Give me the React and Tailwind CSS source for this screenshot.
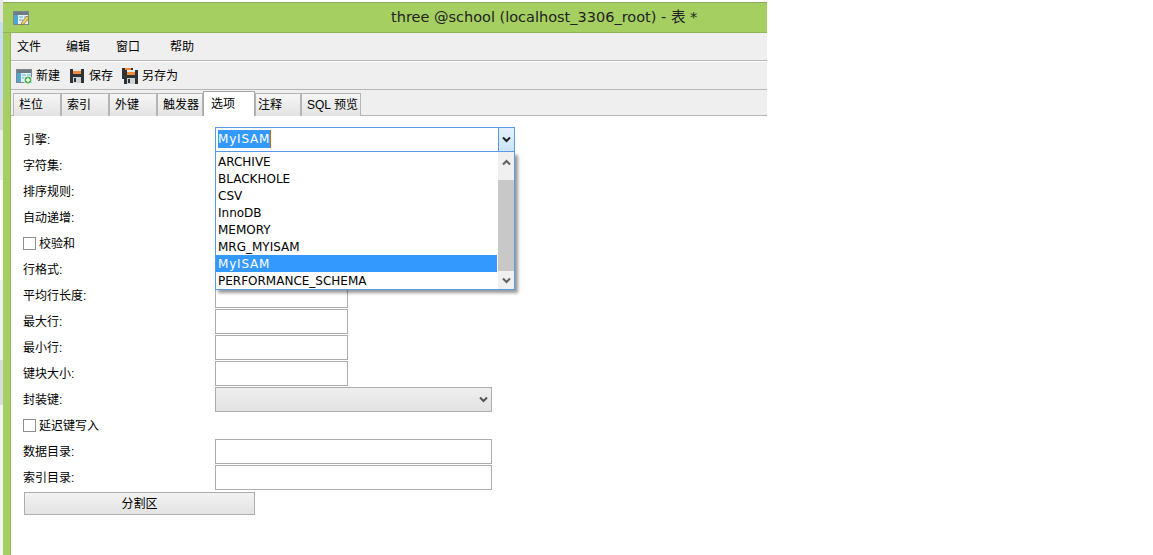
import React from 'react';

const cjk = '[font-family:"Liberation_Sans","Noto_Sans_CJK_SC",sans-serif]';
const latin = '[font-family:"DejaVu_Sans","Noto_Sans_CJK_SC",sans-serif]';

const TableIcon = ({ children }) => (
  <svg width="16" height="16" viewBox="0 0 16 16" className="shrink-0">
    <rect x="0.5" y="1.5" width="15" height="13" fill="#e8f1f6" stroke="#7d8790" />
    <rect x="1" y="2" width="14" height="3" fill="#6f7c86" />
    <rect x="1" y="5" width="4" height="9" fill="#4fa8d0" />
    <rect x="6" y="6" width="4" height="2" fill="#9fd0e6" />
    <rect x="11" y="6" width="4" height="2" fill="#9fd0e6" />
    <rect x="6" y="9" width="4" height="2" fill="#9fd0e6" />
    <rect x="11" y="9" width="4" height="2" fill="#9fd0e6" />
    {children}
  </svg>
);

const Floppy = ({ x = 0, y = 0 }) => (
  <g transform={`translate(${x} ${y})`}>
    <rect x="0" y="1" width="14" height="14" fill="#2e3338" />
    <rect x="3" y="1" width="8" height="5" fill="#f08a3c" />
    <rect x="3" y="1" width="8" height="2" fill="#e8e8e8" />
    <rect x="3" y="9" width="8" height="6" fill="#cfd3d6" />
    <rect x="4" y="10" width="2" height="4" fill="#2e3338" />
  </g>
);

const Field = ({ className = 'w-[133px]' }) => (
  <div className={`h-[25px] mt-px border border-[#adadad] bg-white ${className}`} />
);

const Row = ({ label, children }) => (
  <div className="h-[26px] flex items-start">
    <span className="w-[204px] shrink-0 pl-3 leading-[28px]">{label}</span>
    {children}
  </div>
);

const Check = ({ label }) => (
  <div className="h-[26px] flex items-center pl-3 pt-px">
    <span className="w-[13px] h-[13px] border border-[#8e8e8e] bg-white mr-[3px]" />
    <span>{label}</span>
  </div>
);

const Tab = ({ label, className, active }) => (
  <div
    className={
      active
        ? `h-[25px] -mb-px mt-px flex items-start pt-[3px] pl-[7px] bg-white border border-b-0 border-[#a8a8a8] ${className}`
        : `h-[23px] mt-[3px] flex items-center whitespace-nowrap bg-gradient-to-b from-[#f6f6f6] to-[#e3e3e3] border border-b-0 border-[#b5b5b5] ${className}`
    }
  >
    {label}
  </div>
);

const Chevron = ({ color = '#555555' }) => (
  <svg width="9" height="7" viewBox="0 0 9 7">
    <path d="M1 1.5 L4.5 5 L8 1.5" fill="none" stroke={color} strokeWidth="2" />
  </svg>
);

const engines = ['ARCHIVE', 'BLACKHOLE', 'CSV', 'InnoDB', 'MEMORY', 'MRG_MYISAM', 'MyISAM', 'PERFORMANCE_SCHEMA'];

export default function App() {
  return (
    <div className={`relative w-[1153px] h-[555px] overflow-hidden bg-white flex text-[12px] text-black ${cjk}`}>
      {/* bit of the window behind */}
      <div className="w-[3px] shrink-0 flex flex-col">
        <div className="h-[22px] bg-[#e4e4e4]" />
        <div className="h-[78px] bg-[#c5dcf2]" />
        <div className="h-[30px] bg-[#d8d8d8]" />
        <div className="h-[50px] bg-[#ececec]" />
        <div className="h-[100px] bg-white" />
        <div className="h-[80px] bg-[#eef1f5]" />
        <div className="h-[45px] bg-[#d9dde2]" />
        <div className="flex-1 bg-[#f4f4f4]" />
      </div>

      <div className="w-[764px] shrink-0 mt-[2px] flex flex-col border-t border-[#87a85a] bg-[#a5cf61]">
        <div className="h-[30px] shrink-0 flex items-center pl-[10px] border-b border-[#8fb358]">
          <TableIcon>
            <path d="M8 15 L9 12 L14 6 L16 8 L11 14 Z" fill="#f4d35e" stroke="#7a5a20" strokeWidth="0.6" />
          </TableIcon>
          <span className={`ml-[362px] text-[14.5px] leading-none text-[#222222] whitespace-nowrap ${latin}`}>
            three @school (localhost_3306_root) - 表 *
          </span>
        </div>

        <div className="flex-1 flex min-h-0">
          <div className="w-[8px] shrink-0 border-r border-[#93b85c]" />
          <div className="flex-1 min-w-0 bg-white flex flex-col">
            <div className="h-[28px] shrink-0 bg-[#efefef] border-b border-[#b5b5b5] flex items-center">
              <span className="ml-[6px] w-[49px]">文件</span>
              <span className="w-[50px]">编辑</span>
              <span className="w-[54px]">窗口</span>
              <span>帮助</span>
            </div>

            <div className="h-[29px] shrink-0 bg-[#efefef] border-t border-white border-b border-b-[#b5b5b5] flex items-center pl-[5px] pt-px">
              <TableIcon>
                <circle cx="12" cy="12" r="4" fill="#3fae49" stroke="#fff" strokeWidth="0.8" />
                <path d="M12 9.8 V14.2 M9.8 12 H14.2" stroke="#fff" strokeWidth="1.4" />
              </TableIcon>
              <span className="ml-[4px] w-[33px]">新建</span>
              <svg width="16" height="16" viewBox="0 0 16 16" className="shrink-0">
                <Floppy x={1} />
              </svg>
              <span className="ml-[4px] w-[33px]">保存</span>
              <svg width="16" height="16" viewBox="0 0 16 16" className="shrink-0">
                <rect x="0" y="0" width="11" height="11" fill="#2e3338" />
                <rect x="3" y="0" width="6" height="3" fill="#f08a3c" />
                <Floppy x={2} y={1} />
              </svg>
              <span className="ml-[4px]">另存为</span>
            </div>

            <div className="h-[26px] shrink-0 bg-[#efefef] border-b border-[#b5b5b5] flex pl-[2px]">
              <Tab label="栏位" className="w-[48px] pl-[5px]" />
              <Tab label="索引" className="w-[48px] pl-[5px]" />
              <Tab label="外键" className="w-[48px] pl-[5px]" />
              <Tab label="触发器" className="w-[46px] pl-[5px]" />
              <Tab label="选项" className="w-[52px]" active />
              <Tab label="注释" className="w-[46px] pl-[2px]" />
              <Tab label="SQL 预览" className="w-[60px] pl-[5px]" />
            </div>

            <div className="pt-[10px] flex flex-col">
              <Row label="引擎:">
                <div className="w-[300px]" />
              </Row>
              <Row label="字符集:" />
              <Row label="排序规则:" />
              <Row label="自动递增:" />
              <Check label="校验和" />
              <Row label="行格式:" />
              <Row label="平均行长度:">
                <Field />
              </Row>
              <Row label="最大行:">
                <Field />
              </Row>
              <Row label="最小行:">
                <Field />
              </Row>
              <Row label="键块大小:">
                <Field />
              </Row>
              <Row label="封装键:">
                <div className="h-[25px] mt-px w-[277px] flex items-center justify-end pr-[3px] border border-[#adadad] bg-gradient-to-b from-[#efefef] to-[#e2e2e2]">
                  <Chevron />
                </div>
              </Row>
              <Check label="延迟键写入" />
              <Row label="数据目录:">
                <Field className="w-[277px]" />
              </Row>
              <Row label="索引目录:">
                <Field className="w-[277px]" />
              </Row>
              <button className="ml-[13px] mt-[2px] w-[231px] h-[23px] border border-[#adadad] bg-gradient-to-b from-[#f2f2f2] to-[#e3e3e3] flex items-center justify-center">
                分割区
              </button>
            </div>
          </div>
        </div>
      </div>

      {/* open engine combo lies over the form */}
      <div className={`absolute left-[215px] top-[127px] w-[300px] ${latin}`}>
        <div className="h-[25px] flex border border-[#569de5] bg-white">
          <div className="flex-1 flex items-start pt-[2px] pl-[2px]">
            <span className="bg-[#3399ff] text-white h-[18px] leading-[18px] tracking-[0.8px] border-r border-[#c86a20]">MyISAM</span>
          </div>
          <div className="w-[16px] flex items-center justify-center border-l border-[#569de5] bg-gradient-to-b from-[#e4f1fb] to-[#cce4f9]">
            <Chevron color="#222222" />
          </div>
        </div>
        <div className="h-[138px] flex bg-white border border-t-0 border-[#569de5] shadow-[3px_3px_3px_rgba(0,0,0,0.4)]">
          <div className="flex-1 pt-px">
            {engines.map((name) => (
              <div
                key={name}
                className={`h-[17px] pl-[2px] leading-[18px] whitespace-nowrap ${name === 'MyISAM' ? 'bg-[#3399ff] text-white tracking-[0.8px]' : ''}`}
              >
                {name}
              </div>
            ))}
          </div>
          <div className="w-[16px] ml-px flex flex-col bg-[#f0f0f0]">
            <div className="h-[28px] flex justify-center pt-[7px]">
              <span className="rotate-180 h-[7px] flex">
                <Chevron color="#606060" />
              </span>
            </div>
            <div className="h-[91px] bg-[#c8c8c8]" />
            <div className="flex-1 flex justify-center items-center">
              <Chevron color="#606060" />
            </div>
          </div>
        </div>
      </div>
    </div>
  );
}
